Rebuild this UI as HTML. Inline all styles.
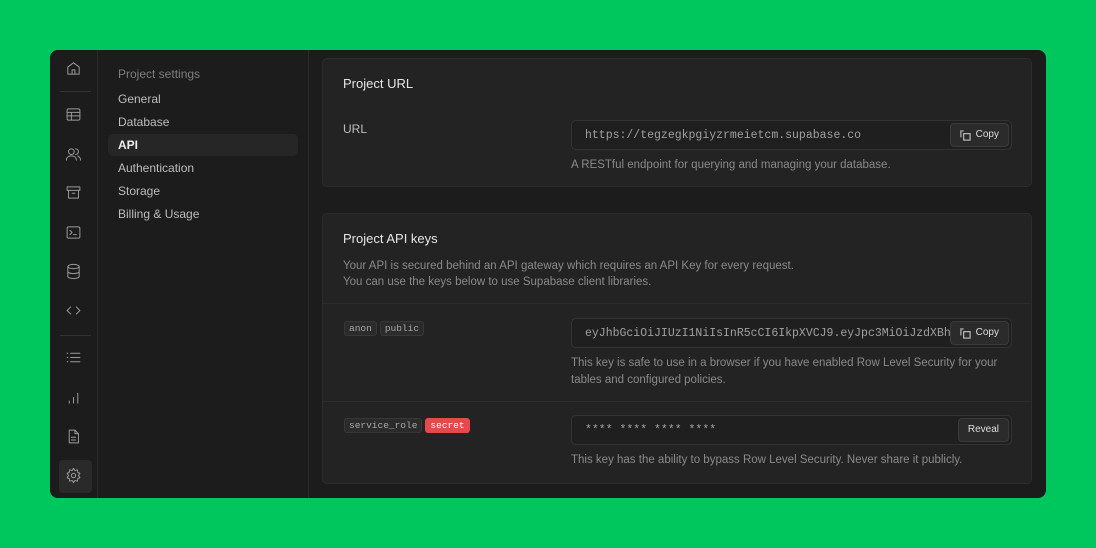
<!DOCTYPE html>
<html><head><meta charset="utf-8"><style>
*{box-sizing:border-box;margin:0;padding:0}
body{width:1096px;height:548px;background:#00c65e;font-family:"Liberation Sans",sans-serif;position:relative;overflow:hidden}
.win{position:absolute;left:50px;top:50px;width:996px;height:448px;background:#1c1c1c;border-radius:8px;overflow:hidden}
.rail{position:absolute;left:0;top:0;width:48px;height:448px;background:#1c1c1c;border-right:1px solid #2a2a2a}
.nav{position:absolute;left:48px;top:0;width:211px;height:448px;background:#1c1c1c;border-right:1px solid #2a2a2a}
.ic{position:absolute;left:15px;width:20px;height:20px}
.ic svg{width:17px;height:17px;stroke:#9a9a9a;fill:none;stroke-width:1.4;stroke-linecap:round;stroke-linejoin:round}
.sep{position:absolute;left:10px;width:31px;height:1px;background:#333}
.nav .h{position:absolute;left:20px;top:17px;color:#7e7e7e;font-size:12px}
.nav .it{position:absolute;left:10px;width:190px;height:22px;padding-left:10px;line-height:22px;color:#bdbdbd;font-size:12px;border-radius:5px}
.nav .act{background:#262626;color:#eee;font-weight:bold}
.card{position:absolute;left:272px;width:710px;background:#232323;border:1px solid #2c2c2c;border-radius:5px}
.t{position:absolute;left:20px;color:#e6e6e6;font-size:13px}
.lbl{position:absolute;left:20px;color:#bdbdbd;font-size:12px}
.inp{position:absolute;left:248px;width:441px;height:30px;border:1px solid #333;background:#1f1f1f;border-radius:5px;font-family:"Liberation Mono",monospace;font-size:11.5px;color:#a0a0a0;padding-left:13px;line-height:30px;overflow:hidden;white-space:nowrap}
.clip{display:inline-block;width:365px;overflow:hidden;vertical-align:top}
.btn{position:absolute;right:2px;top:2px;height:24px;background:#2b2b2b;border:1px solid #3a3a3a;border-radius:4px;font-family:"Liberation Sans",sans-serif;font-size:10px;color:#ddd;line-height:22px;padding:0 9px;display:flex;align-items:center;gap:5px}
.btn svg{width:11px;height:11px;stroke:#bbb;fill:none;stroke-width:1.3}
.help{position:absolute;left:248px;color:#8a8a8a;font-size:11.5px;line-height:17px}
.tag{display:inline-block;height:15px;line-height:13px;padding:0 4px;background:#2b2b2b;border:1px solid #383838;border-radius:3px;font-family:"Liberation Mono",monospace;font-size:9.5px;color:#a8a8a8;margin-right:3px}
.hr{position:absolute;left:0;width:708px;height:1px;background:#2c2c2c}
</style></head><body>
<div class="win">
<div class="rail">
<div class="ic" style="top:10px"><svg viewBox="0 0 24 24"><path d="M4 10l8-6 8 6v10H4z M10 20v-6h4v6"/></svg></div>
<div class="sep" style="top:41px"></div>
<div class="ic" style="top:56px"><svg viewBox="0 0 24 24"><rect x="3" y="4" width="18" height="16" rx="2"/><path d="M3 9h18M3 14h18M9 9v11"/></svg></div>
<div class="ic" style="top:96px"><svg viewBox="0 0 24 24"><circle cx="9" cy="8" r="4"/><path d="M2 20c0-4 3-6 7-6s7 2 7 6M15 4a4 4 0 010 8M18 14c2 1 4 3 4 6"/></svg></div>
<div class="ic" style="top:134px"><svg viewBox="0 0 24 24"><rect x="3" y="4" width="18" height="5"/><path d="M5 9v11h14V9M10 13h4"/></svg></div>
<div class="ic" style="top:174px"><svg viewBox="0 0 24 24"><rect x="3" y="4" width="18" height="16" rx="2"/><path d="M7 9l3 3-3 3M12 15h4"/></svg></div>
<div class="ic" style="top:213px"><svg viewBox="0 0 24 24"><ellipse cx="12" cy="5" rx="8" ry="3"/><path d="M4 5v14c0 1.7 3.6 3 8 3s8-1.3 8-3V5M4 12c0 1.7 3.6 3 8 3s8-1.3 8-3"/></svg></div>
<div class="ic" style="top:252px"><svg viewBox="0 0 24 24"><path d="M8 7l-5 5 5 5M16 7l5 5-5 5"/></svg></div>
<div class="sep" style="top:285px"></div>
<div class="ic" style="top:299px"><svg viewBox="0 0 24 24"><path d="M8 6h13M8 12h13M8 18h13M3 6h1M3 12h1M3 18h1"/></svg></div>
<div class="ic" style="top:339px"><svg viewBox="0 0 24 24"><path d="M6 20v-3M12 20v-8M18 20V6"/></svg></div>
<div class="ic" style="top:378px"><svg viewBox="0 0 24 24"><path d="M6 3h8l5 5v13H6z M14 3v5h5M9 13h6M9 17h6"/></svg></div>
<div style="position:absolute;left:9px;top:410px;width:33px;height:33px;background:#2a2a2a;border-radius:4px"></div>
<div class="ic" style="top:417px"><svg viewBox="0 0 24 24"><circle cx="12" cy="12" r="3"/><path d="M12 2l2 3 3.5-1 .5 3.5L21 9l-2 3 2 3-3 1.5-.5 3.5-3.5-1-2 3-2-3-3.5 1-.5-3.5L3 15l2-3-2-3 3-1.5.5-3.5 3.5 1z"/></svg></div>
</div>
<div class="nav">
<div class="h">Project settings</div>
<div class="it" style="top:38px">General</div>
<div class="it" style="top:61px">Database</div>
<div class="it act" style="top:84px">API</div>
<div class="it" style="top:107px">Authentication</div>
<div class="it" style="top:130px">Storage</div>
<div class="it" style="top:153px">Billing &amp; Usage</div>
</div>
<div class="card" style="top:8px;height:129px">
<div class="t" style="top:17px">Project URL</div>
<div class="lbl" style="top:63px">URL</div>
<div class="inp" style="top:61px">https://tegzegkpgiyzrmeietcm.supabase.co<div class="btn"><svg viewBox="0 0 12 12"><path d="M4 1H1v7"/><rect x="4" y="4" width="7" height="7"/></svg>Copy</div></div>
<div class="help" style="top:98px">A RESTful endpoint for querying and managing your database.</div>
</div>
<div class="card" style="top:163px;height:271px">
<div class="t" style="top:17px">Project API keys</div>
<div class="help" style="left:20px;top:44px;line-height:16px">Your API is secured behind an API gateway which requires an API Key for every request.<br>You can use the keys below to use Supabase client libraries.</div>
<div class="hr" style="top:89px"></div>
<div style="position:absolute;left:21px;top:104px"><span class="tag">anon</span><span class="tag">public</span></div>
<div class="inp" style="top:104px"><span class="clip">eyJhbGciOiJIUzI1NiIsInR5cCI6IkpXVCJ9.eyJpc3MiOiJzdXBhYmFzZSIsInJlZiI6</span><div class="btn"><svg viewBox="0 0 12 12"><path d="M4 1H1v7"/><rect x="4" y="4" width="7" height="7"/></svg>Copy</div></div>
<div class="help" style="top:141px">This key is safe to use in a browser if you have enabled Row Level Security for your<br>tables and configured policies.</div>
<div class="hr" style="top:187px"></div>
<div style="position:absolute;left:21px;top:201px"><span class="tag">service_role</span><span class="tag" style="background:#e5484d;border-color:#e5484d;color:#fff">secret</span></div>
<div class="inp" style="top:201px">**** **** **** ****<div class="btn">Reveal</div></div>
<div class="help" style="top:238px">This key has the ability to bypass Row Level Security. Never share it publicly.</div>
</div>
</div>
</body></html>
